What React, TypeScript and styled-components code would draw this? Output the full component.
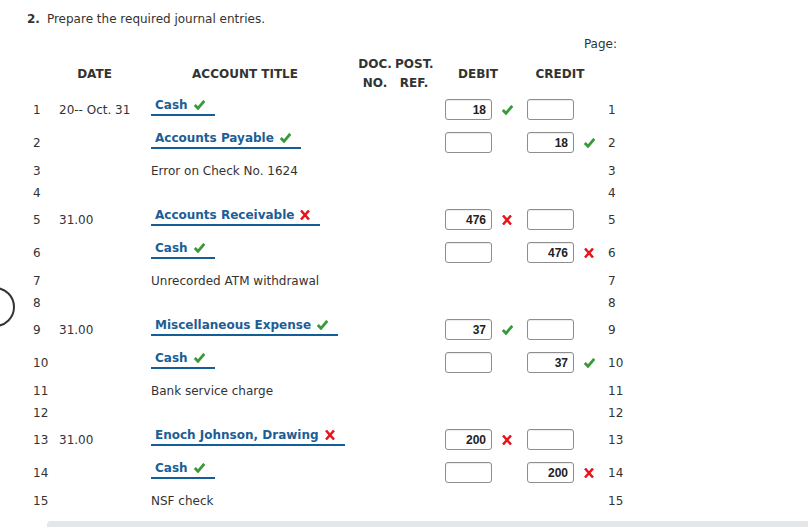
import React from "react";
import styled, { createGlobalStyle } from "styled-components";

const GlobalStyle = createGlobalStyle`
  html, body {
    margin: 0;
    padding: 0;
    background: #ffffff;
    overflow: hidden;
  }
  body {
    font-family: "DejaVu Sans", Verdana, sans-serif;
    font-size: 12px;
    color: #333333;
  }
`;

const COLUMNS = "28px 96px 204px 40px 45px 80px 80px 40px";

const Page = styled.div`
  position: relative;
  padding: 11px 0 0 27px;
`;

const Heading = styled.div`
  line-height: 16px;
  white-space: nowrap;
`;

const HeadingNum = styled.b`
  margin-right: 7px;
`;

const PageLabel = styled.div`
  width: 590px;
  margin-top: 9px;
  line-height: 16px;
  text-align: right;
`;

const HeaderRow = styled.div`
  display: grid;
  box-sizing: border-box;
  grid-template-columns: ${COLUMNS};
  height: 40px;
  margin-top: 1px;
  padding-top: 2px;
  align-items: center;
`;

const HeaderCell = styled.div<{ $pr?: number }>`
  font-weight: bold;
  text-align: center;
  line-height: 19px;
  white-space: nowrap;
  padding-right: ${(p) => p.$pr ?? 0}px;
`;

const Row = styled.div<{ $tall: boolean }>`
  display: grid;
  box-sizing: border-box;
  grid-template-columns: ${COLUMNS};
  height: ${(p) => (p.$tall ? 33 : 22)}px;
  padding-top: ${(p) => (p.$tall ? 0 : 2)}px;
  align-items: center;
  white-space: nowrap;
`;

const NumCell = styled.div<{ $pl: number }>`
  padding-left: ${(p) => p.$pl}px;
`;

const AccountCell = styled.div`
  display: flex;
  align-items: center;
`;

const AccountField = styled.div`
  display: inline-flex;
  align-items: center;
  gap: 6px;
  height: 18px;
  padding: 0 10px 0 4px;
  margin-bottom: 7px;
  border-bottom: 2px solid #135d98;
  color: #1c5e96;
  font-weight: bold;
`;

const AmountCell = styled.div<{ $pl: number }>`
  display: flex;
  align-items: center;
  gap: 9px;
  padding-left: ${(p) => p.$pl}px;
`;

const Amount = styled.input`
  box-sizing: border-box;
  width: 47px;
  height: 21px;
  margin: 0;
  padding: 0 5px;
  border: 1px solid #8e8e8e;
  border-radius: 3px;
  box-shadow: inset 0 1px 1px rgba(0, 0, 0, 0.08);
  background: #fff;
  text-align: right;
  font-family: "Liberation Sans", Arial, sans-serif;
  font-weight: bold;
  font-size: 12px;
  color: #222;
  outline: none;
`;

const MarkSlot = styled.span`
  display: inline-flex;
  width: 12px;
  justify-content: center;
`;

const Ring = styled.div`
  position: absolute;
  left: -25px;
  top: 287px;
  width: 40px;
  height: 40px;
  box-sizing: border-box;
  border: 2.5px solid #333;
  border-radius: 50%;
`;

const BottomPanel = styled.div`
  margin: 10px 0 0 20px;
  height: 8px;
  background: #e3e7ea;
  border-top-left-radius: 4px;
`;

const Check = () => (
  <svg width="11" height="10" viewBox="0 0 11 10">
    <path d="M0.8 5 L4 8.3 L10.3 0.8" fill="none" stroke="#3a9a3a" strokeWidth="2.8" />
  </svg>
);

const Cross = () => (
  <svg width="10" height="10" viewBox="0 0 10 10">
    <path d="M1 0.5 L9 9.5 M9 0.5 L1 9.5" fill="none" stroke="#e8141c" strokeWidth="2.5" />
  </svg>
);

const Mark = ({ ok }: { ok?: boolean }) => (
  <MarkSlot>{ok === undefined ? null : ok ? <Check /> : <Cross />}</MarkSlot>
);

type Entry = {
  num: number;
  date?: string;
  account?: string;
  accountOk?: boolean;
  note?: string;
  debit?: string;
  debitOk?: boolean;
  credit?: string;
  creditOk?: boolean;
  input?: boolean;
};

const rows: Entry[] = [
  { num: 1, date: "20-- Oct. 31", account: "Cash", accountOk: true, debit: "18", debitOk: true, input: true },
  { num: 2, account: "Accounts Payable", accountOk: true, credit: "18", creditOk: true, input: true },
  { num: 3, note: "Error on Check No. 1624" },
  { num: 4 },
  { num: 5, date: "31.00", account: "Accounts Receivable", accountOk: false, debit: "476", debitOk: false, input: true },
  { num: 6, account: "Cash", accountOk: true, credit: "476", creditOk: false, input: true },
  { num: 7, note: "Unrecorded ATM withdrawal" },
  { num: 8 },
  { num: 9, date: "31.00", account: "Miscellaneous Expense", accountOk: true, debit: "37", debitOk: true, input: true },
  { num: 10, account: "Cash", accountOk: true, credit: "37", creditOk: true, input: true },
  { num: 11, note: "Bank service charge" },
  { num: 12 },
  { num: 13, date: "31.00", account: "Enoch Johnson, Drawing", accountOk: false, debit: "200", debitOk: false, input: true },
  { num: 14, account: "Cash", accountOk: true, credit: "200", creditOk: false, input: true },
  { num: 15, note: "NSF check" },
];

export default function App() {
  return (
    <>
      <GlobalStyle />
      <Page>
        <Heading>
          <HeadingNum>2.</HeadingNum>Prepare the required journal entries.
        </Heading>
        <PageLabel>Page:</PageLabel>
        <HeaderRow>
          <div />
          <HeaderCell $pr={17}>DATE</HeaderCell>
          <HeaderCell $pr={16}>ACCOUNT TITLE</HeaderCell>
          <HeaderCell>
            DOC.
            <br />
            NO.
          </HeaderCell>
          <HeaderCell $pr={7}>
            POST.
            <br />
            REF.
          </HeaderCell>
          <HeaderCell $pr={4}>DEBIT</HeaderCell>
          <HeaderCell>CREDIT</HeaderCell>
          <div />
        </HeaderRow>
        {rows.map((r) => (
          <Row key={r.num} $tall={!!r.input}>
            <NumCell $pl={6}>{r.num}</NumCell>
            <NumCell $pl={4}>{r.date}</NumCell>
            <AccountCell>
              {r.account ? (
                <AccountField>
                  {r.account}
                  {r.accountOk ? <Check /> : <Cross />}
                </AccountField>
              ) : (
                r.note
              )}
            </AccountCell>
            <div />
            <div />
            <AmountCell $pl={5}>
              {r.input && <Amount readOnly value={r.debit ?? ""} />}
              {r.debit && <Mark ok={r.debitOk} />}
            </AmountCell>
            <AmountCell $pl={7}>
              {r.input && <Amount readOnly value={r.credit ?? ""} />}
              {r.credit && <Mark ok={r.creditOk} />}
            </AmountCell>
            <NumCell $pl={8}>{r.num}</NumCell>
          </Row>
        ))}
        <BottomPanel />
        <Ring />
      </Page>
    </>
  );
}
